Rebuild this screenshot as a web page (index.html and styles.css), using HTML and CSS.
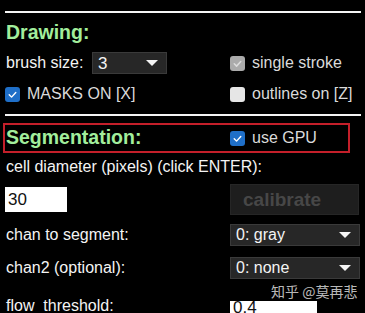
FILE: index.html
```html
<!DOCTYPE html>
<html>
<head>
<meta charset="utf-8">
<link rel="stylesheet" href="styles.css">
</head>
<body>
<div class="panel">
  <div class="rule rule-top"></div>
  <div class="title-row"><span class="title">Drawing:</span></div>

  <div class="row r-brush">
    <div class="cell">
      <span class="label label-brush">brush size:</span>
      <div class="select sel-brush"><span class="sel-text">3</span><span class="arrow"></span></div>
    </div>
    <div class="cell">
      <span class="cb cb-disabled"><svg viewBox="0 0 16 16" width="16" height="16"><polyline points="4.5,8.3 7,10.8 11.5,5.8" fill="none" stroke="#dcdcdc" stroke-width="1.6" stroke-linecap="round" stroke-linejoin="round"/></svg></span>
      <span class="cblabel">single stroke</span>
    </div>
  </div>

  <div class="row r-masks">
    <div class="cell">
      <span class="cb cb-on"><svg viewBox="0 0 16 16" width="16" height="16"><polyline points="4.5,8.3 7,10.8 11.5,5.8" fill="none" stroke="#ffffff" stroke-width="1.5" stroke-linecap="round" stroke-linejoin="round"/></svg></span>
      <span class="cblabel">MASKS ON [X]</span>
    </div>
    <div class="cell">
      <span class="cb cb-off"></span>
      <span class="cblabel">outlines on [Z]</span>
    </div>
  </div>

  <div class="rule rule-mid"></div>

  <div class="row seg-box">
    <div class="cell"><span class="title">Segmentation:</span></div>
    <div class="cell">
      <span class="cb cb-on"><svg viewBox="0 0 16 16" width="16" height="16"><polyline points="4.5,8.3 7,10.8 11.5,5.8" fill="none" stroke="#ffffff" stroke-width="1.5" stroke-linecap="round" stroke-linejoin="round"/></svg></span>
      <span class="cblabel">use GPU</span>
    </div>
  </div>

  <div class="text-row"><span class="label">cell diameter (pixels) (click ENTER):</span></div>

  <div class="row r-diam">
    <div class="cell"><div class="input input-diam">30</div></div>
    <div class="cell"><div class="button">calibrate</div></div>
  </div>

  <div class="row r-chan">
    <div class="cell"><span class="label">chan to segment:</span></div>
    <div class="cell"><div class="select sel-wide"><span class="sel-text">0: gray</span><span class="arrow"></span></div></div>
  </div>

  <div class="row r-chan2">
    <div class="cell"><span class="label">chan2 (optional):</span></div>
    <div class="cell"><div class="select sel-wide"><span class="sel-text">0: none</span><span class="arrow"></span></div></div>
  </div>

  <div class="row r-flow">
    <div class="cell cell-top"><span class="label label-flow">flow_threshold:</span></div>
    <div class="cell cell-top"><div class="input input-flow">0.4</div></div>
  </div>

  <div class="watermark">知乎 @莫再悲</div>
</div>
</body>
</html>
```

FILE: styles.css
```css
html, body {
  margin: 0;
  padding: 0;
  background: #000;
}

body {
  font-family: "Liberation Sans", Arial, sans-serif;
  font-size: 16px;
  color: #f4f4f4;
  overflow: hidden;
  height: 313px;
}

.panel {
  position: relative;
  width: 356px;
  margin-left: 5px;
  display: flex;
  flex-direction: column;
}

.rule {
  height: 2px;
  background: #f4f4f4;
}

.rule-top {
  margin-top: 11px;
}

.title-row {
  height: 39px;
  display: flex;
  align-items: center;
  padding-left: 1px;
}

.title {
  font-size: 19.5px;
  font-weight: bold;
  color: #a2ee9c;
  line-height: 1;
}

.row {
  display: grid;
  grid-template-columns: 225px 131px;
  align-items: center;
}

.cell {
  display: flex;
  align-items: center;
  height: 100%;
}

.cell-top {
  align-items: flex-start;
}

.label {
  padding-left: 1px;
  line-height: 1;
  white-space: nowrap;
}

.label-brush {
  width: 86px;
}

.label-flow {
  margin-top: -3px;
}

.r-brush {
  height: 22px;
}

.r-masks {
  height: 40px;
}

.cb {
  width: 15px;
  height: 15px;
  border-radius: 3px;
  display: inline-flex;
  align-items: center;
  justify-content: center;
  margin-right: 7px;
  flex: none;
}

.cb svg {
  display: block;
  width: 15px;
  height: 15px;
}

.cb-on {
  background: #1f6fc8;
}

.cb-disabled {
  background: #ababab;
}

.cb-off {
  background: #e6e6e6;
}

.cblabel {
  color: #dadada;
  line-height: 1;
  white-space: nowrap;
}

.select {
  box-sizing: border-box;
  height: 22px;
  background: #272727;
  border: 1px solid #3a3a3a;
  display: flex;
  align-items: center;
  justify-content: space-between;
  padding: 0 8px 0 5px;
}

.sel-brush {
  width: 75px;
}

.sel-wide {
  width: 130px;
}

.sel-text {
  color: #f4f4f4;
  line-height: 1;
}

.sel-brush .sel-text {
  font-size: 17px;
}

.arrow {
  width: 0;
  height: 0;
  border-left: 6px solid transparent;
  border-right: 6px solid transparent;
  border-top: 6px solid #f4f4f4;
}

.seg-box {
  margin-top: 7px;
  margin-left: -2px;
  width: 347px;
  box-sizing: border-box;
  height: 30px;
  border: 2px solid #c41f2a;
  grid-template-columns: 225px auto;
}

.seg-box .cell:first-child {
  padding-left: 1px;
}

.text-row {
  height: 28px;
  display: flex;
  align-items: center;
}

.r-diam {
  margin-top: 3px;
  height: 31px;
}

.input {
  box-sizing: border-box;
  background: #fff;
  color: #111;
  display: flex;
  align-items: center;
  padding-left: 3px;
  line-height: 1;
}

.input-diam {
  width: 62px;
  height: 25px;
  font-size: 17px;
}

.button {
  box-sizing: border-box;
  width: 129px;
  height: 31px;
  background: #1e1e1e;
  border: 1px solid #262626;
  color: #474747;
  font-weight: bold;
  font-size: 19px;
  display: flex;
  align-items: center;
  padding-left: 12px;
  line-height: 1;
}

.r-chan {
  margin-top: 9px;
  height: 22px;
}

.r-chan2 {
  margin-top: 11px;
  height: 22px;
}

.r-flow {
  margin-top: 22px;
  height: 25px;
}

.input-flow {
  width: 87px;
  height: 25px;
  font-size: 17px;
  align-items: flex-start;
  line-height: 14px;
  padding-top: 0;
}

.watermark {
  position: absolute;
  left: 266px;
  top: 284px;
  font-family: "Noto Sans CJK SC", sans-serif;
  font-size: 14px;
  color: rgba(235, 235, 235, 0.8);
  line-height: 1;
  white-space: nowrap;
}
```
